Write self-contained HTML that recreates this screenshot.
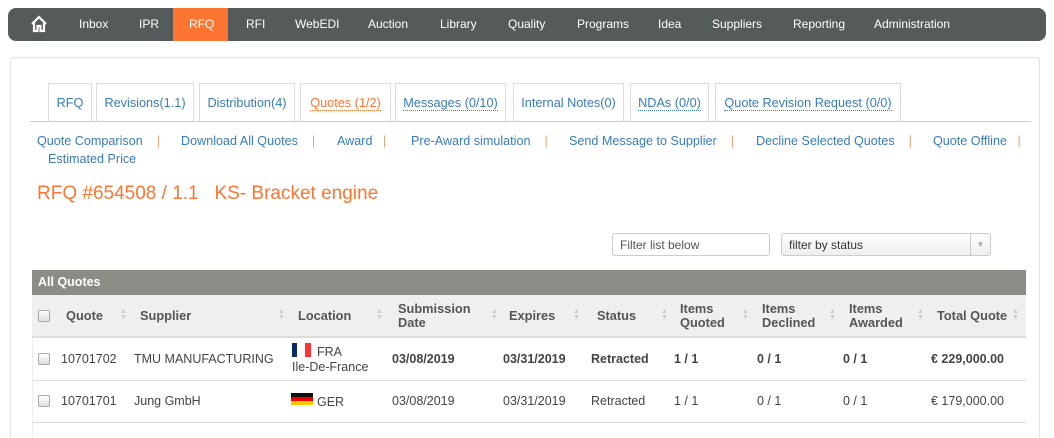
<!DOCTYPE html>
<html style="overflow:hidden;width:1054px;height:438px"><head><meta charset="utf-8"><style>
*{box-sizing:border-box;margin:0;padding:0}
body{width:1054px;height:438px;overflow:hidden;background:#fff;font-family:"Liberation Sans",Arial,sans-serif;font-size:13px;color:#444;position:relative}
.a{position:absolute;white-space:nowrap}
#nav{position:absolute;left:8px;top:8px;width:1038px;height:33px;background:#555a5b;border-radius:8px;overflow:hidden}
#nav span{position:absolute;top:9px;color:#fff;font-size:12px}
#act{position:absolute;left:165px;top:0;width:55px;height:33px;background:#fd7530}
#panel{position:absolute;left:10px;top:57px;width:1030px;height:381px;border:1px solid #e3e3e3;border-bottom:none;border-radius:4px 4px 0 0}
.tab{position:absolute;top:83px;height:39px;border:1px solid #ddd;border-bottom:none;color:#3a7cb8;font-size:12.7px;padding-top:12px;text-align:center}
.dot{border-bottom:1px dotted #3a7cb8}
.lk{position:absolute;top:134px;color:#3a7cb8;font-size:12.6px;white-space:nowrap}
.bar{color:#e8a070}
.inp{position:absolute;border:1px solid #ccc;border-radius:3px;height:23px;top:233px;padding:4px 7px;font-size:12px;color:#555}
.th{position:absolute;font-weight:bold;color:#555;font-size:12.8px;line-height:14px}
.ar{position:absolute;color:#ccc;font-size:7px;line-height:6px}
.td{position:absolute;font-size:12.5px;color:#444;white-space:nowrap}
.cb{position:absolute;left:38px;width:12px;height:12px;border:1px solid #aaa;border-radius:2px;background:linear-gradient(#fff,#ddd)}
</style></head><body>
<div id="nav"><div id="act"></div>
<svg style="position:absolute;left:22px;top:7px" width="18" height="18" viewBox="0 0 18 18"><path d="M2 9 L9 2 L16 9 M4 7.5 V16 H7.5 V11 H10.5 V16 H14 V7.5" fill="none" stroke="#fff" stroke-width="2.2"/></svg>
<span style="left:71px">Inbox</span><span style="left:131px">IPR</span><span style="left:181px">RFQ</span><span style="left:238px">RFI</span><span style="left:287px">WebEDI</span><span style="left:360px">Auction</span><span style="left:432px">Library</span><span style="left:500px">Quality</span><span style="left:569px">Programs</span><span style="left:650px">Idea</span><span style="left:704px">Suppliers</span><span style="left:785px">Reporting</span><span style="left:866px">Administration</span>
</div>
<div id="panel"></div>
<div class="tab" style="left:48px;width:44px">RFQ</div>
<div class="tab" style="left:96px;width:98px">Revisions(1.1)</div>
<div class="tab" style="left:199px;width:96px">Distribution(4)</div>
<div class="tab" style="left:300px;width:91px;color:#fd7530"><span style="border-bottom:1px dotted #fd7530">Quotes (1/2)</span></div>
<div class="tab" style="left:395px;width:111px"><span class="dot">Messages (0/10)</span></div>
<div class="tab" style="left:513px;width:111px">Internal Notes(0)</div>
<div class="tab" style="left:630px;width:79px"><span class="dot">NDAs (0/0)</span></div>
<div class="tab" style="left:715px;width:186px"><span class="dot">Quote Revision Request (0/0)</span></div>
<div class="a" style="left:30px;top:121px;width:1001px;height:1px;background:#ccc"></div>
<div class="lk" style="left:37px">Quote Comparison &nbsp;&nbsp;&nbsp;<span class="bar">|</span></div>
<div class="lk" style="left:181px">Download All Quotes &nbsp;&nbsp;&nbsp;<span class="bar">|</span></div>
<div class="lk" style="left:337px">Award &nbsp;&nbsp;<span class="bar">|</span></div>
<div class="lk" style="left:411px">Pre-Award simulation &nbsp;&nbsp;&nbsp;<span class="bar">|</span></div>
<div class="lk" style="left:569px">Send Message to Supplier &nbsp;&nbsp;&nbsp;<span class="bar">|</span></div>
<div class="lk" style="left:756px">Decline Selected Quotes &nbsp;&nbsp;&nbsp;<span class="bar">|</span></div>
<div class="lk" style="left:933px">Quote Offline &nbsp;&nbsp;<span class="bar">|</span></div>
<div class="lk" style="left:48px;top:152px">Estimated Price</div>
<div class="a" style="left:37px;top:183px;font-size:19px;color:#fd7530">RFQ #654508 / 1.1 &nbsp;&nbsp;KS- Bracket engine</div>
<div class="inp" style="left:612px;width:158px">Filter list below</div>
<div class="inp" style="left:781px;width:210px;background:linear-gradient(#fff,#eee);color:#333">filter by status<span style="position:absolute;right:0;top:0;width:20px;height:21px;border-left:1px solid #ccc;color:#aaa;font-size:8px;text-align:center;padding-top:6px">▼</span></div>
<div class="a" style="left:32px;top:270px;width:994px;height:25px;background:#8c8c87;color:#fff;font-weight:bold;font-size:12.5px;padding:5px 6px">All Quotes</div>
<div class="a" style="left:32px;top:295px;width:994px;height:43px;background:#efefef;border-bottom:2px solid #ddd"></div>
<div class="cb" style="top:310px"></div>
<div class="th" style="left:66px;top:309px">Quote</div>
<div class="th" style="left:140px;top:309px">Supplier</div>
<div class="th" style="left:298px;top:309px">Location</div>
<div class="th" style="left:398px;top:302px">Submission<br>Date</div>
<div class="th" style="left:509px;top:309px">Expires</div>
<div class="th" style="left:597px;top:309px">Status</div>
<div class="th" style="left:680px;top:302px">Items<br>Quoted</div>
<div class="th" style="left:762px;top:302px">Items<br>Declined</div>
<div class="th" style="left:849px;top:302px">Items<br>Awarded</div>
<div class="th" style="left:937px;top:309px">Total Quote</div>
<div class="ar" style="left:120px;top:309px">▲<br>▼</div><div class="ar" style="left:278px;top:309px">▲<br>▼</div><div class="ar" style="left:376px;top:309px">▲<br>▼</div><div class="ar" style="left:491px;top:309px">▲<br>▼</div><div class="ar" style="left:573px;top:309px">▲<br>▼</div><div class="ar" style="left:661px;top:309px">▲<br>▼</div><div class="ar" style="left:742px;top:309px">▲<br>▼</div><div class="ar" style="left:829px;top:309px">▲<br>▼</div><div class="ar" style="left:917px;top:309px">▲<br>▼</div><div class="ar" style="left:1012px;top:309px">▲<br>▼</div>
<div class="a" style="left:32px;top:380px;width:994px;height:1px;background:#ddd"></div>
<div class="a" style="left:32px;top:422px;width:994px;height:1px;background:#ddd"></div>
<div class="a" style="left:32px;top:338px;width:1px;height:100px;background:#eee"></div>
<div class="cb" style="top:353px"></div>
<div class="td" style="left:61px;top:352px">10701702</div>
<div class="td" style="left:134px;top:352px">TMU MANUFACTURING</div>
<div class="a" style="left:292px;top:343px;width:5px;height:14px;background:#0a2a6a"></div><div class="a" style="left:305px;top:343px;width:6px;height:14px;background:#f33"></div>
<div class="td" style="left:317px;top:345px">FRA</div>
<div class="td" style="left:292px;top:360px">Ile-De-France</div>
<div class="td" style="left:392px;top:352px;font-weight:bold">03/08/2019</div>
<div class="td" style="left:503px;top:352px;font-weight:bold">03/31/2019</div>
<div class="td" style="left:591px;top:352px;font-weight:bold">Retracted</div>
<div class="td" style="left:674px;top:352px;font-weight:bold">1 / 1</div>
<div class="td" style="left:757px;top:352px;font-weight:bold">0 / 1</div>
<div class="td" style="left:843px;top:352px;font-weight:bold">0 / 1</div>
<div class="td" style="left:931px;top:352px;font-weight:bold">€ 229,000.00</div>
<div class="cb" style="top:395px"></div>
<div class="td" style="left:61px;top:394px">10701701</div>
<div class="td" style="left:134px;top:394px">Jung GmbH</div>
<div class="a" style="left:291px;top:393px;width:22px;height:4px;background:#111"></div><div class="a" style="left:291px;top:397px;width:22px;height:4px;background:#e00"></div><div class="a" style="left:291px;top:401px;width:22px;height:4px;background:#fc0"></div>
<div class="td" style="left:317px;top:395px">GER</div>
<div class="td" style="left:392px;top:394px">03/08/2019</div>
<div class="td" style="left:503px;top:394px">03/31/2019</div>
<div class="td" style="left:591px;top:394px">Retracted</div>
<div class="td" style="left:674px;top:394px">1 / 1</div>
<div class="td" style="left:757px;top:394px">0 / 1</div>
<div class="td" style="left:843px;top:394px">0 / 1</div>
<div class="td" style="left:931px;top:394px">€ 179,000.00</div>
</body></html>
